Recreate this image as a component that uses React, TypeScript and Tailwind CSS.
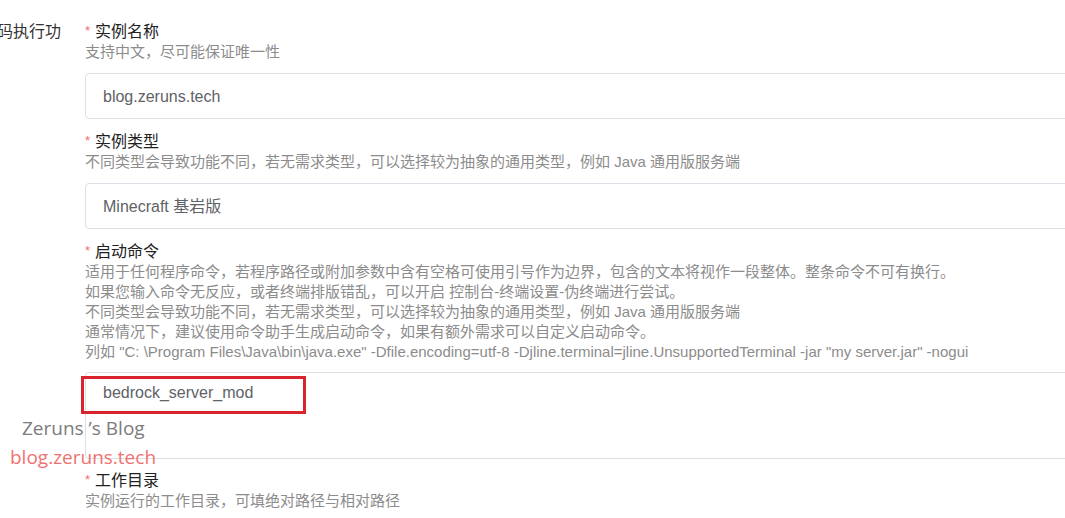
import React from "react";

const font = { fontFamily: '"Liberation Sans", "Noto Sans CJK SC", sans-serif' };

function Label({ children }: { children: React.ReactNode }) {
    return (
        <div className="h-5 flex items-center text-[16px] leading-5 text-[#222]">
            <span className="text-[#f56c6c] text-[13px] mr-[5px] -mt-[3px]">*</span>
            {children}
        </div>
    );
}

function Desc({ children }: { children: React.ReactNode }) {
    return <div className="text-[15px] leading-5 text-[#8c8c8c] whitespace-nowrap">{children}</div>;
}

function Field({ value }: { value: string }) {
    return (
        <div className="mt-[11px] h-[46px] border border-[#dcdfe6] rounded-[4px] bg-white flex items-center pl-[17px] pt-[2px] text-[16px] text-[#606266]">
            {value}
        </div>
    );
}

export default function App() {
    return (
        <div className="relative w-[1065px] h-[518px] overflow-hidden bg-white" style={font}>
            <div className="flex pt-[22px]">
                {/* left label, cut at the edge */}
                <div className="w-[85px] shrink-0 overflow-hidden">
                    <div className="-ml-[3px] text-[16px] leading-5 text-[#333] whitespace-nowrap">码执行功</div>
                </div>

                <div className="w-[1200px] shrink-0">
                    <div className="mb-[13px]">
                        <Label>实例名称</Label>
                        <Desc>支持中文，尽可能保证唯一性</Desc>
                        <Field value="blog.zeruns.tech" />
                    </div>

                    <div className="mb-[13px]">
                        <Label>实例类型</Label>
                        <Desc>不同类型会导致功能不同，若无需求类型，可以选择较为抽象的通用类型，例如 Java 通用版服务端</Desc>
                        <Field value="Minecraft 基岩版" />
                    </div>

                    <div className="mb-[12px]">
                        <Label>启动命令</Label>
                        <Desc>适用于任何程序命令，若程序路径或附加参数中含有空格可使用引号作为边界，包含的文本将视作一段整体。整条命令不可有换行。</Desc>
                        <Desc>如果您输入命令无反应，或者终端排版错乱，可以开启 控制台-终端设置-伪终端进行尝试。</Desc>
                        <Desc>不同类型会导致功能不同，若无需求类型，可以选择较为抽象的通用类型，例如 Java 通用版服务端</Desc>
                        <Desc>通常情况下，建议使用命令助手生成启动命令，如果有额外需求可以自定义启动命令。</Desc>
                        <Desc>列如 "C: \Program Files\Java\bin\java.exe" -Dfile.encoding=utf-8 -Djline.terminal=jline.UnsupportedTerminal -jar "my server.jar" -nogui</Desc>
                        <div className="relative mt-[10px] h-[87px] border border-[#dcdfe6] rounded-[4px] pl-[17px] pt-[10px] text-[16px] leading-5 text-[#606266]">
                            bedrock_server_mod
                            <div className="absolute -left-[5px] top-[3px] w-[225px] h-[38px] border-[3px] border-[#d9232d]" />
                        </div>
                    </div>

                    <div>
                        <Label>工作目录</Label>
                        <Desc>实例运行的工作目录，可填绝对路径与相对路径</Desc>
                    </div>
                </div>
            </div>

            {/* watermark */}
            <div
                className="absolute left-[10px] top-[414px] leading-[29px] text-[19px] font-medium whitespace-nowrap"
                style={{ fontFamily: '"Open Sans", "Noto Sans", sans-serif' }}
            >
                <div className="pl-[12px] text-[#7c7c7c]">Zeruns ’s Blog</div>
                <div className="text-[#ef7272]">blog.zeruns.tech</div>
            </div>
        </div>
    );
}
